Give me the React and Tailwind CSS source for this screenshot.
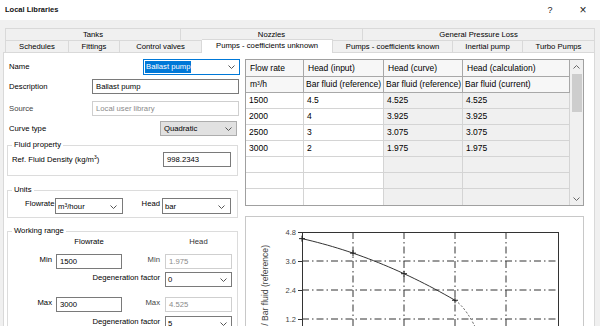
import React from "react";

function Chevron({ color = "#555" }) {
  return (
    <svg width="7" height="4" viewBox="0 0 7 4" className="shrink-0">
      <polyline points="0.5,0.5 3.5,3.5 6.5,0.5" fill="none" stroke={color} strokeWidth="1" />
    </svg>
  );
}

function ChevronUp({ color = "#666" }) {
  return (
    <svg width="7" height="4" viewBox="0 0 7 4" className="shrink-0">
      <polyline points="0.5,3.5 3.5,0.5 6.5,3.5" fill="none" stroke={color} strokeWidth="1" />
    </svg>
  );
}

const tabsRow1 = [
  { label: "Tanks", w: "w-[176px]" },
  { label: "Nozzles", w: "w-[182px]" },
  { label: "General Pressure Loss", w: "w-[232px]" },
];

const tableRows = [
  ["1500", "4.5", "4.525", "4.525"],
  ["2000", "4", "3.925", "3.925"],
  ["2500", "3", "3.075", "3.075"],
  ["3000", "2", "1.975", "1.975"],
  ["", "", "", ""],
  ["", "", "", ""],
  ["", "", "", ""],
];

function Chart() {
  const y = (v) => 15 + (4.8 - v) * (29 / 1.2);
  const pts = [];
  for (let i = 0; i <= 30; i++) {
    const t = i / 10;
    const h = 4.525 - 0.475 * t - 0.125 * t * t;
    pts.push(`${(56 + t * 51).toFixed(2)},${y(h).toFixed(2)}`);
  }
  const gx = [107, 158, 209, 260];
  const gy = [44, 73, 102];
  const ticks = [
    ["4.8", 15],
    ["3.6", 44],
    ["2.4", 73],
    ["1.2", 102],
  ];
  const marks = [
    [56, y(4.525)],
    [107, y(3.925)],
    [158, y(3.075)],
    [209, y(1.975)],
  ];
  return (
    <svg width="337" height="128" viewBox="0 0 337 128" className="block">
      {gx.map((x) => (
        <line key={"gx" + x} x1={x} y1={15} x2={x} y2={128} stroke="#333" strokeWidth="1" strokeDasharray="7 3 1.5 3" />
      ))}
      {gy.map((yy) => (
        <line key={"gy" + yy} x1={56} y1={yy} x2={312} y2={yy} stroke="#333" strokeWidth="1" strokeDasharray="7 3 1.5 3" />
      ))}
      <line x1={56.5} y1={15} x2={56.5} y2={128} stroke="#333" strokeWidth="1" />
      <line x1={56} y1={15.5} x2={312} y2={15.5} stroke="#333" strokeWidth="1" />
      <line x1={312.5} y1={15} x2={312.5} y2={128} stroke="#333" strokeWidth="1" />
      {ticks.map(([t, yy]) => (
        <g key={t}>
          <line x1={52} y1={yy + 0.5} x2={56} y2={yy + 0.5} stroke="#333" strokeWidth="1" />
          <text x={50} y={yy + 2.8} textAnchor="end" fontSize="7.5" fill="#444" fontFamily="Liberation Sans, Arial, sans-serif">
            {t}
          </text>
        </g>
      ))}
      <text
        transform="translate(22,28) rotate(-90)"
        textAnchor="end"
        fontSize="8.6"
        fill="#444"
        fontFamily="Liberation Sans, Arial, sans-serif"
      >
        Head / Bar fluid (reference)
      </text>
      <polyline points={pts.join(" ")} fill="none" stroke="#333" strokeWidth="1" />
      <path d="M209,83.3 Q221,91 234,120" fill="none" stroke="#555" strokeWidth="1" strokeDasharray="2 2" />
      {marks.map(([mx, my], i) => (
        <g key={i} stroke="#222" strokeWidth="1">
          <line x1={mx - 3} y1={my} x2={mx + 3} y2={my} />
          <line x1={mx} y1={my - 3} x2={mx} y2={my + 3} />
        </g>
      ))}
    </svg>
  );
}

export default function App() {
  return (
    <div className="w-[600px] h-[326px] overflow-hidden bg-[#f0f0f0] font-['Liberation_Sans',Arial,sans-serif] text-[7.7px] leading-none text-black">
      {/* Title bar */}
      <div className="h-[20px] bg-white flex items-center pl-[5px]">
        <span className="font-bold text-[7.5px] text-[#111]">Local Libraries</span>
        <span className="ml-auto w-[10px] text-center text-[9px] text-[#222]">?</span>
        <span className="ml-[22px] mr-[11px] w-[12px] text-center text-[12px] text-[#222]">×</span>
      </div>

      {/* Tabs */}
      <div className="mt-[8px] ml-[5px] w-[590px]">
        <div className="flex h-[12px]">
          {tabsRow1.map((t, i) => (
            <div
              key={t.label}
              className={
                "h-[12px] border-t border-r border-[#d9d9d9] bg-[#f0f0f0] flex items-center justify-center " +
                t.w +
                (i === 0 ? " border-l" : "")
              }
            >
              {t.label}
            </div>
          ))}
        </div>
        <div className="flex h-[12px] items-start">
          <div className="w-[64px] h-[12px] border-t border-l border-r border-[#d9d9d9] bg-[#f0f0f0] flex items-center justify-center">Schedules</div>
          <div className="w-[51px] h-[12px] border-t border-r border-[#d9d9d9] bg-[#f0f0f0] flex items-center justify-center">Fittings</div>
          <div className="w-[82px] h-[12px] border-t border-r border-[#d9d9d9] bg-[#f0f0f0] flex items-center justify-center">Control valves</div>
          <div className="relative z-10 -mt-[1px] w-[131px] h-[14px] border-t border-r border-[#d9d9d9] bg-white flex items-center justify-center pb-[1px]">Pumps - coefficients unknown</div>
          <div className="w-[120px] h-[12px] border-t border-r border-[#d9d9d9] bg-[#f0f0f0] flex items-center justify-center">Pumps - coefficients known</div>
          <div className="w-[70px] h-[12px] border-t border-r border-[#d9d9d9] bg-[#f0f0f0] flex items-center justify-center">Inertial pump</div>
          <div className="w-[72px] h-[12px] border-t border-r border-[#d9d9d9] bg-[#f0f0f0] flex items-center justify-center">Turbo Pumps</div>
        </div>
      </div>

      {/* Page */}
      <div className="ml-[3px] w-[592px] h-[300px] border border-[#d9d9d9] bg-white flex">
        {/* Left column */}
        <div className="w-[241px] shrink-0">
          <div className="pl-[5px] pt-[6px]">
            <div className="flex items-center h-[16px]">
              <span className="w-[134px]">Name</span>
              <div className="w-[97px] h-[16px] border border-[#0078d7] flex items-center pl-[1px] pr-[4px]">
                <span className="bg-[#0078d7] text-white px-[1px] py-[2px]">Ballast pump</span>
                <span className="ml-auto">
                  <Chevron />
                </span>
              </div>
            </div>
            <div className="flex items-center h-[15px] mt-[4px]">
              <span className="w-[83px]">Description</span>
              <div className="w-[147px] h-[15px] border border-[#7a7a7a] flex items-center pl-[3px]">Ballast pump</div>
            </div>
            <div className="flex items-center h-[15px] mt-[7px]">
              <span className="w-[83px] text-[#444]">Source</span>
              <div className="w-[147px] h-[15px] border border-[#cfcfcf] flex items-center pl-[3px] text-[#8a8a8a]">Local user library</div>
            </div>
            <div className="flex items-center h-[15px] mt-[5px]">
              <span className="w-[151px]">Curve type</span>
              <div className="w-[77px] h-[15px] border border-[#adadad] bg-[#e1e1e1] flex items-center pl-[3px] pr-[4px]">
                <span>Quadratic</span>
                <span className="ml-auto">
                  <Chevron />
                </span>
              </div>
            </div>
          </div>

          {/* Fluid property */}
          <fieldset className="ml-[3px] mt-[4px] w-[231px] border border-[#dcdcdc] pb-[8px]">
            <legend className="ml-[4px] px-[2px] leading-[10px]">Fluid property</legend>
            <div className="flex items-center mt-[2px] h-[15px]">
              <span className="ml-[4px] w-[151px]">
                Ref. Fluid Density (kg/m<sup className="text-[5px]">3</sup>)
              </span>
              <div className="w-[68px] h-[15px] border border-[#7a7a7a] flex items-center pl-[3px]">998.2343</div>
            </div>
          </fieldset>

          {/* Units */}
          <fieldset className="ml-[3px] mt-[9px] w-[231px] border border-[#dcdcdc] pb-[3px]">
            <legend className="ml-[4px] px-[2px] leading-[10px]">Units</legend>
            <div className="flex items-start mt-[3px] h-[16px]">
              <span className="ml-[17px] w-[30px] pt-[2px]">Flowrate</span>
              <div className="w-[68px] h-[16px] border border-[#7a7a7a] flex items-center pl-[2px] pr-[5px] pt-[2px]">
                <span>
                  m<sup className="text-[5px]">3</sup>/hour
                </span>
                <span className="ml-auto">
                  <Chevron />
                </span>
              </div>
              <span className="w-[39px] text-right pr-[2px] pt-[2px]">Head</span>
              <div className="w-[69px] h-[16px] border border-[#7a7a7a] flex items-center pl-[2px] pr-[5px] pt-[2px]">
                <span>bar</span>
                <span className="ml-auto">
                  <Chevron />
                </span>
              </div>
            </div>
          </fieldset>

          {/* Working range */}
          <fieldset className="ml-[3px] mt-[8px] w-[231px] border border-[#dcdcdc] pb-[6px]">
            <legend className="ml-[4px] px-[2px] leading-[10px]">Working range</legend>
            <div className="flex mt-[1px] h-[10px] items-center">
              <span className="ml-[48px] w-[66px] text-center">Flowrate</span>
              <span className="ml-[43px] w-[67px] text-center text-[#333]">Head</span>
            </div>
            <div className="flex items-start mt-[7px] h-[15px]">
              <span className="w-[44px] text-right pt-[2px]">Min</span>
              <div className="ml-[4px] w-[66px] h-[15px] border border-[#7a7a7a] flex items-center pl-[3px]">1500</div>
              <span className="w-[38px] text-right pt-[2px] text-[#444]">Min</span>
              <div className="ml-[5px] w-[67px] h-[15px] border border-[#cfcfcf] flex items-center pl-[3px] text-[#8a8a8a]">1.975</div>
            </div>
            <div className="flex items-start mt-[3px] h-[15px]">
              <span className="w-[152px] text-right pt-[2px]">Degeneration factor</span>
              <div className="ml-[5px] w-[67px] h-[15px] border border-[#7a7a7a] flex items-center pl-[2px] pr-[4px]">
                <span>0</span>
                <span className="ml-auto">
                  <Chevron />
                </span>
              </div>
            </div>
            <div className="flex items-start mt-[10px] h-[15px]">
              <span className="w-[44px] text-right pt-[2px]">Max</span>
              <div className="ml-[4px] w-[66px] h-[15px] border border-[#7a7a7a] flex items-center pl-[3px]">3000</div>
              <span className="w-[38px] text-right pt-[2px] text-[#444]">Max</span>
              <div className="ml-[5px] w-[67px] h-[15px] border border-[#cfcfcf] flex items-center pl-[3px] text-[#8a8a8a]">4.525</div>
            </div>
            <div className="flex items-start mt-[4px] h-[15px]">
              <span className="w-[152px] text-right pt-[2px]">Degeneration factor</span>
              <div className="ml-[5px] w-[67px] h-[15px] border border-[#7a7a7a] flex items-center pl-[2px] pr-[4px]">
                <span>5</span>
                <span className="ml-auto">
                  <Chevron />
                </span>
              </div>
            </div>
          </fieldset>
        </div>

        {/* Right column */}
        <div className="w-[339px] shrink-0 pt-[6px]">
          <div className="flex">
            <div className="w-[325px] border-l border-t border-b border-[#a0a0a0] text-[8.5px]">
              <div className="grid grid-cols-[58px_80px_79px_107px]">
                {["Flow rate", "Head (input)", "Head (curve)", "Head (calculation)"].map((h) => (
                  <div key={h} className="h-[17px] border-r border-b border-[#a8a8a8] bg-[#f7f7f7] flex items-center pl-[4px] whitespace-nowrap overflow-hidden">
                    {h}
                  </div>
                ))}
                <div className="h-[16px] border-r border-b border-[#a8a8a8] bg-[#f7f7f7] flex items-center pl-[4px] whitespace-nowrap overflow-hidden">
                  <span>
                    m<sup className="text-[5px]">3</sup>/h
                  </span>
                </div>
                {["Bar fluid (reference)", "Bar fluid (reference)", "Bar fluid (current)"].map((h, i) => (
                  <div key={i} className="h-[16px] border-r border-b border-[#a8a8a8] bg-[#f7f7f7] flex items-center pl-[2px] whitespace-nowrap overflow-hidden">
                    {h}
                  </div>
                ))}
                {tableRows.map((r, ri) =>
                  r.map((c, ci) => (
                    <div
                      key={ri + "-" + ci}
                      className={
                        "h-[16px] border-r border-b border-[#d4d4d4] flex items-center pl-[3px] whitespace-nowrap overflow-hidden " +
                        (ci >= 2 ? "bg-[#f0f0f0]" : "bg-white") +
                        (ri === tableRows.length - 1 ? " border-b-0 h-[15px]" : "")
                      }
                    >
                      {c}
                    </div>
                  ))
                )}
              </div>
            </div>
            <div className="w-[14px] border-t border-b border-r border-[#a0a0a0] bg-[#f0f0f0] flex flex-col items-center">
              <div className="h-[14px] flex items-center justify-center">
                <ChevronUp />
              </div>
              <div className="w-[10px] h-[38px] bg-[#cdcdcd]" />
              <div className="mt-auto h-[12px] flex items-center justify-center">
                <Chevron color="#666" />
              </div>
            </div>
          </div>

          <div className="mt-[10px] h-[130px] border border-[#c8c8c8] bg-white">
            <Chart />
          </div>
        </div>
      </div>
    </div>
  );
}
